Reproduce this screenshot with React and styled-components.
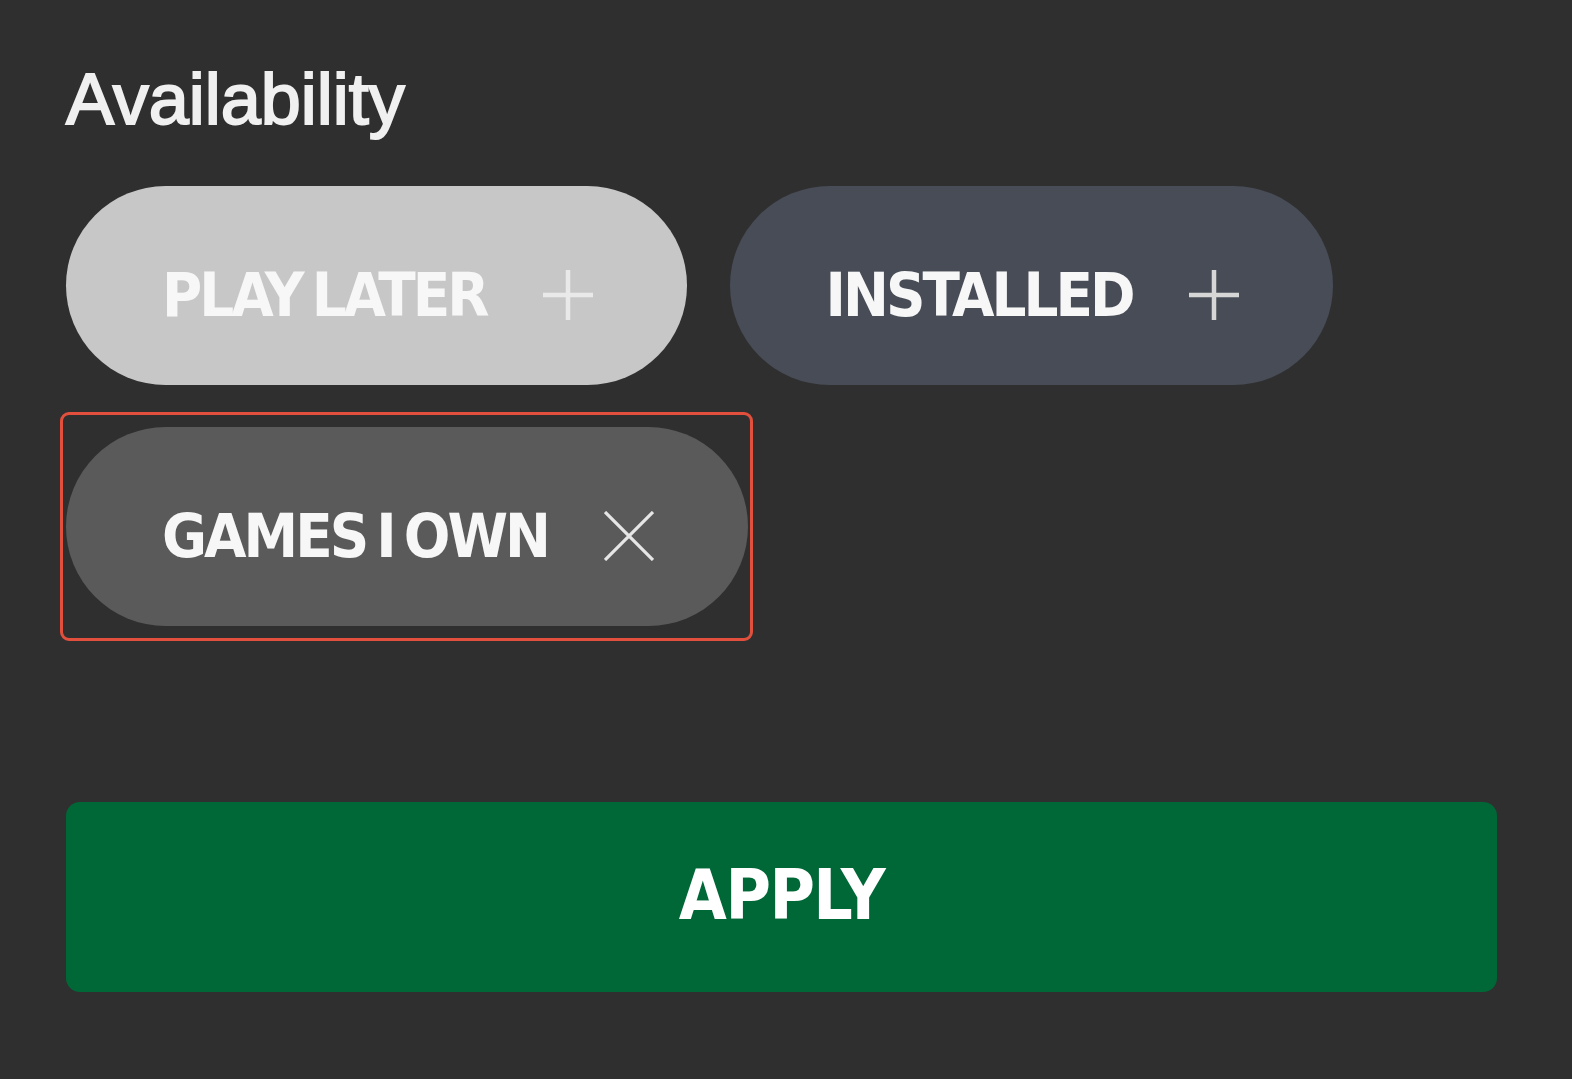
import React from "react"
import styled, { createGlobalStyle } from "styled-components"

const GlobalStyle = createGlobalStyle`
  html, body {
    margin: 0;
    padding: 0;
    background: #2f2f2f;
  }
  body {
    font-family: "Liberation Sans", Arial, sans-serif;
  }
`

const narrowFont = `"Liberation Sans Narrow", "DejaVu Sans Condensed", "Liberation Sans", sans-serif`

const Panel = styled.div`
  min-height: 1079px;
  box-sizing: border-box;
  padding: 63px 75px 0 66px;
  background: #2f2f2f;
`

const Heading = styled.h2`
  margin: 0 0 51px;
  font-family: "Liberation Sans", Arial, sans-serif;
  font-size: 72px;
  line-height: 72px;
  font-weight: 400;
  color: #f0f0f0;
  -webkit-text-stroke: 2px #f0f0f0;
`

const ChipList = styled.div`
  display: flex;
  flex-wrap: wrap;
  row-gap: 42px;
  column-gap: 43px;
`

const chipColors = {
  light: "#c7c7c7",
  slate: "#474c56",
  active: "#5a5a5a",
}

const Chip = styled.button`
  position: relative;
  display: flex;
  align-items: center;
  gap: 56px;
  height: 199px;
  box-sizing: border-box;
  padding: 18px 94px 0 96px;
  border: none;
  border-radius: 100px;
  background: ${(p) => chipColors[p.$variant]};
  color: #f7f7f7;
  font-family: ${narrowFont};
  font-size: 61px;
  font-weight: 700;
  letter-spacing: -3px;
  word-spacing: -6px;
  line-height: 1;
  white-space: nowrap;
  cursor: pointer;

  ${(p) =>
    p.$highlighted &&
    `
    &::after {
      content: "";
      position: absolute;
      top: -15px;
      bottom: -15px;
      left: -6px;
      right: -5px;
      border: 3px solid #e2503d;
      border-radius: 9px;
      pointer-events: none;
    }
  `}
`

const IconBox = styled.svg`
  flex: none;
  width: 50px;
  height: 50px;
`

const PlusIcon = ({ color }) => (
  <IconBox viewBox="0 0 50 50">
    <path d="M25 0 V50 M0 25 H50" stroke={color} strokeWidth="4.5" fill="none" />
  </IconBox>
)

const CloseIcon = ({ color }) => (
  <IconBox viewBox="0 0 50 50">
    <path d="M1 1 L49 49 M49 1 L1 49" stroke={color} strokeWidth="3.2" fill="none" />
  </IconBox>
)

const ApplyButton = styled.button`
  display: flex;
  align-items: center;
  justify-content: center;
  width: 100%;
  height: 190px;
  margin-top: 176px;
  padding: 0 0 4px;
  border: none;
  border-radius: 14px;
  background: #006837;
  color: #ffffff;
  font-family: ${narrowFont};
  font-size: 69px;
  font-weight: 700;
  letter-spacing: -1.5px;
  line-height: 1;
  cursor: pointer;
`

const filters = [
  { label: "PLAY LATER", variant: "light", selected: false },
  { label: "INSTALLED", variant: "slate", selected: false },
  { label: "GAMES I OWN", variant: "active", selected: true },
]

export default function App() {
  return (
    <>
      <GlobalStyle />
      <Panel>
        <Heading>Availability</Heading>
        <ChipList>
          {filters.map((f) => (
            <Chip key={f.label} $variant={f.variant} $highlighted={f.selected}>
              <span>{f.label}</span>
              {f.selected ? (
                <CloseIcon color="#e6e6e6" />
              ) : (
                <PlusIcon color={f.variant === "light" ? "#e9e9e9" : "#d6d6d6"} />
              )}
            </Chip>
          ))}
        </ChipList>
        <ApplyButton>APPLY</ApplyButton>
      </Panel>
    </>
  )
}
